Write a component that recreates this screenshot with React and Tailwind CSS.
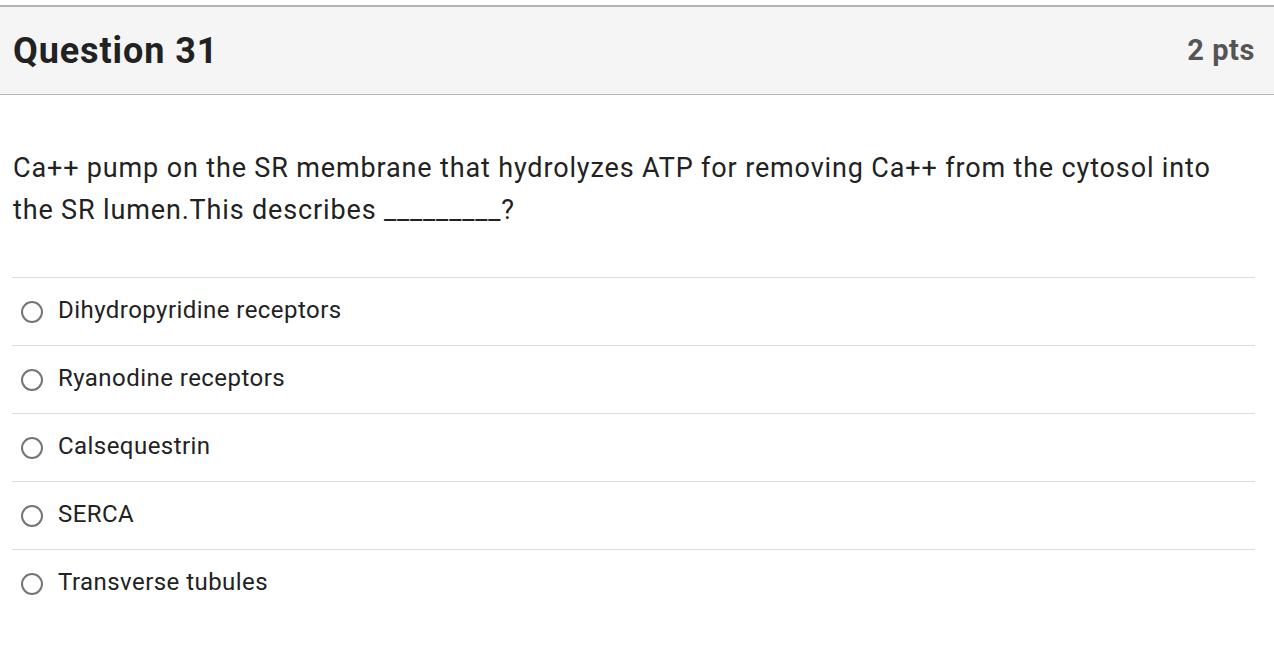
import React from 'react';

const answers = [
    'Dihydropyridine receptors',
    'Ryanodine receptors',
    'Calsequestrin',
    'SERCA',
    'Transverse tubules',
];

function Radio() {
    return <span className="w-[22px] h-[22px] rounded-full border-2 border-[#767676] bg-white shrink-0" />;
}

export default function App() {
    return (
        <div className="min-h-screen bg-white pt-[5px] font-['Roboto',sans-serif] text-[#2d2d2d]">
            {/* question header */}
            <div className="h-[90px] flex items-center justify-between pl-[13px] pr-[19px] bg-[#f5f5f5] border-t-2 border-b border-[#b4b4b4]">
                <h2 className="text-[36px] font-bold text-[#222] leading-none tracking-[0.9px]">Question 31</h2>
                <span className="text-[29px] font-bold text-[#555] leading-none tracking-[0.6px]">2 pts</span>
            </div>

            <div className="pl-[12px] pr-[19px]">
                <p className="mt-[52px] mb-[46px] pl-[1px] text-[27px] leading-[42px] tracking-[0.85px] text-[#222]">
                    Ca++ pump on the SR membrane that hydrolyzes ATP for removing Ca++ from the cytosol into
                    the SR lumen.This describes _________?
                </p>

                <div>
                    {answers.map((a) => (
                        <label key={a} className="h-[68px] flex items-center gap-[15px] pl-[9px] border-t border-[#dedede]">
                            <Radio />
                            <span className="text-[24px] tracking-[0.45px] text-[#222] -mt-[4px]">{a}</span>
                        </label>
                    ))}
                </div>
            </div>
        </div>
    );
}
